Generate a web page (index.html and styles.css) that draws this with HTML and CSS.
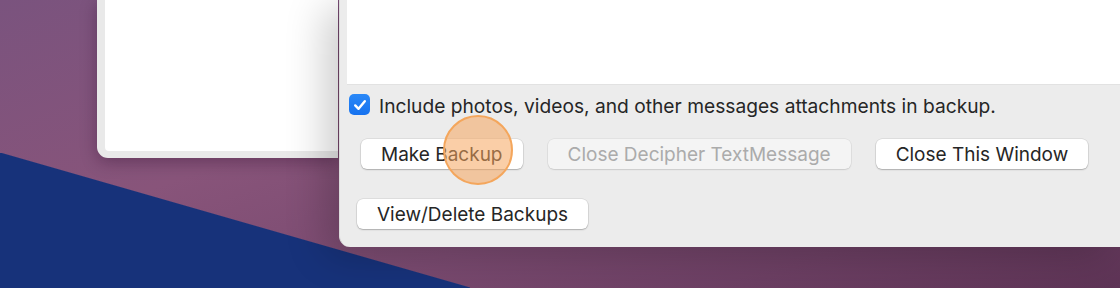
FILE: index.html
```html
<!DOCTYPE html>
<html lang="en">
<head>
    <meta charset="UTF-8">
    <meta name="viewport" content="width=device-width, initial-scale=1.0">
    <title>Decipher TextMessage - Backup</title>
    <link rel="stylesheet" href="styles.css">
</head>
<body>

<div class="desktop">
    <!-- window sitting behind -->
    <div class="back-window">
        <div class="back-content"></div>
    </div>

    <!-- backup window -->
    <div class="main-window">
        <div class="list-area"></div>

        <label class="option-row">
            <span class="checkbox">
                <svg viewBox="0 0 20 20" width="16" height="16">
                    <path d="M4 10.5 L8.2 14.8 L16 5.2" fill="none" stroke="#fff" stroke-width="3" stroke-linecap="round" stroke-linejoin="round"/>
                </svg>
            </span>
            <span class="option-text">Include photos, videos, and other messages attachments in backup.</span>
        </label>

        <div class="button-row">
            <button class="mac-button">Make Backup</button>
            <button class="mac-button" disabled>Close Decipher TextMessage</button>
            <button class="mac-button">Close This Window</button>
        </div>

        <div class="button-row second">
            <button class="mac-button">View/Delete Backups</button>
        </div>
    </div>

    <!-- click marker from the recording -->
    <div class="click-marker"></div>
</div>

</body>
</html>
```

FILE: styles.css
```css
html, body {
    margin: 0;
    padding: 0;
}
body {
    width: 1120px;
    height: 288px;
    overflow: hidden;
    font-family: Inter, "Noto Sans", sans-serif;
    color: #262626;
    background:
        linear-gradient(to top right, #17327a 50%, rgba(23, 50, 122, 0) 50.4%) 0 153px / 470px 135px no-repeat,
        linear-gradient(160deg, #7a537e 0%, #88547a 35%, #7a4a70 60%, #5e3456 100%);
}
.desktop {
    position: relative;
    display: flex;
    align-items: flex-start;
    padding-left: 97px;
    height: 288px;
}
.back-window {
    width: 241px;
    height: 158px;
    box-sizing: border-box;
    padding: 0 0 7px 8px;
    background: #e9e9e9;
    border-bottom-left-radius: 11px;
    box-shadow: 0 4px 16px rgba(40, 10, 40, 0.35);
}
.back-content {
    height: 100%;
    background: #fff;
    border-bottom-left-radius: 4px;
}
.main-window {
    flex: 1;
    height: 247px;
    margin-left: 1px;
    box-sizing: border-box;
    padding-left: 7px;
    background: #ececec;
    border-left: 1px solid #dcdcdc;
    border-bottom-left-radius: 11px;
    box-shadow: -14px 8px 40px rgba(0, 0, 0, 0.2);
}
.list-area {
    height: 85px;
    background: #fff;
    border-bottom: 1px solid #e2e2e2;
    box-sizing: border-box;
}
.option-row {
    display: flex;
    align-items: center;
    gap: 9px;
    margin: 9px 0 0 2px;
    height: 21px;
}
.checkbox {
    display: flex;
    align-items: center;
    justify-content: center;
    width: 21px;
    height: 21px;
    border-radius: 5px;
    background: linear-gradient(#2a88f7, #1672ef);
}
.option-text {
    font-size: 19.2px;
    line-height: 21px;
    margin-top: 4px;
}
.button-row {
    display: flex;
    gap: 25px;
    margin: 24px 0 0 14px;
}
.button-row.second {
    margin: 30px 0 0 10px;
}
.mac-button {
    height: 30px;
    padding: 0 20px;
    font-family: inherit;
    font-size: 19px;
    color: #262626;
    background: #fff;
    border: none;
    border-radius: 6px;
    box-shadow: 0 0 0 0.5px rgba(0, 0, 0, 0.12), 0 1px 1.5px rgba(0, 0, 0, 0.22);
}
.mac-button:disabled {
    color: #ababab;
    background: #f4f4f4;
    box-shadow: 0 0 0 0.5px rgba(0, 0, 0, 0.08), 0 1px 1.5px rgba(0, 0, 0, 0.1);
}
.click-marker {
    position: absolute;
    left: 443px;
    top: 115px;
    width: 66px;
    height: 66px;
    border-radius: 50%;
    border: 2px solid #f4a65c;
    background: rgba(246, 166, 95, 0.55);
}
```
